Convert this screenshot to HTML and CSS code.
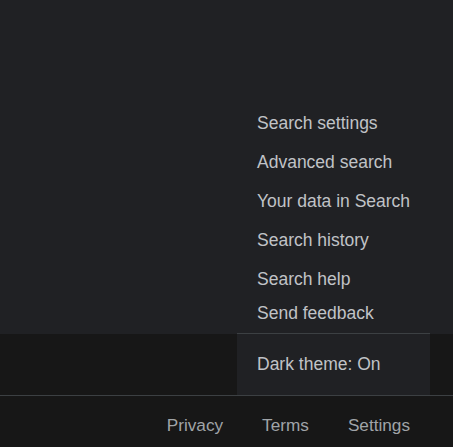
FILE: index.html
```html
<!DOCTYPE html>
<html lang="en">
<head>
<meta charset="utf-8">
<title>Settings menu</title>
<link rel="stylesheet" href="styles.css">
</head>
<body>
<div class="page">
  <main class="content"></main>
  <footer class="footer">
    <div class="footer-upper"></div>
    <div class="footer-lower">
      <nav class="footer-links">
        <a class="footer-link" href="#">Privacy</a>
        <a class="footer-link" href="#">Terms</a>
        <a class="footer-link" href="#">Settings</a>
      </nav>
      <div class="settings-menu">
        <a class="menu-item" href="#">Search settings</a>
        <a class="menu-item" href="#">Advanced search</a>
        <a class="menu-item" href="#">Your data in Search</a>
        <a class="menu-item" href="#">Search history</a>
        <a class="menu-item menu-item-short" href="#">Search help</a>
        <a class="menu-item" href="#">Send feedback</a>
        <a class="menu-item menu-item-theme" href="#">Dark theme: On</a>
      </div>
    </div>
  </footer>
</div>
</body>
</html>
```

FILE: styles.css
```css
html, body {
  margin: 0;
  padding: 0;
  background: #202124;
  font-family: "Liberation Sans", Arial, sans-serif;
}

.page {
  width: 453px;
  height: 447px;
  display: flex;
  flex-direction: column;
  overflow: hidden;
}

.content {
  height: 334px;
  flex: none;
  background: #202124;
}

.footer {
  flex: 1;
  background: #171717;
  display: flex;
  flex-direction: column;
}

.footer-upper {
  height: 61px;
  flex: none;
}

.footer-lower {
  position: relative;
  flex: 1;
  border-top: 1px solid #3c4043;
}

.footer-links {
  display: flex;
  justify-content: flex-end;
  gap: 39px;
  padding: 19px 43px 0 0;
}

.footer-link {
  color: #a0a4a8;
  font-size: 17.2px;
  line-height: 20px;
  text-decoration: none;
}

.settings-menu {
  position: absolute;
  right: 23px;
  bottom: calc(100% + 1px);
  width: 193px;
  background: #202124;
  display: flex;
  flex-direction: column;
}

.menu-item {
  display: block;
  padding-left: 20px;
  height: 39px;
  line-height: 39px;
  font-size: 17.5px;
  color: #c0c3c7;
  text-decoration: none;
  white-space: nowrap;
}

.menu-item-short {
  height: 34px;
  line-height: 39px;
}

.menu-item-theme {
  height: 61px;
  line-height: 61px;
  border-top: 1px solid #3c4043;
}
```
